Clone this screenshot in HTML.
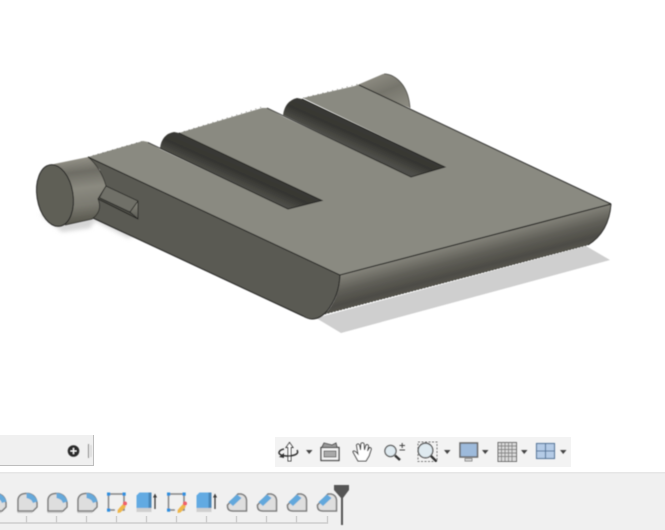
<!DOCTYPE html>
<html>
<head>
<meta charset="utf-8">
<style>
html,body{margin:0;padding:0;background:#fff;width:665px;height:530px;overflow:hidden}
svg{display:block;position:absolute;left:0;top:0}
</style>
</head>
<body>
<svg width="665" height="530" viewBox="0 0 665 530" xmlns="http://www.w3.org/2000/svg">
<defs>
<linearGradient id="barrel" gradientUnits="userSpaceOnUse" x1="72" y1="160" x2="80" y2="224">
<stop offset="0" stop-color="#918f85"/><stop offset=".2" stop-color="#6e6d65"/><stop offset=".45" stop-color="#8b8a80"/><stop offset=".72" stop-color="#7b7a71"/><stop offset="1" stop-color="#545349"/>
</linearGradient>
<linearGradient id="frontg" gradientUnits="userSpaceOnUse" x1="470" y1="240" x2="482" y2="285">
<stop offset="0" stop-color="#86857c"/><stop offset=".35" stop-color="#5f5e57"/><stop offset=".62" stop-color="#4d4c46"/><stop offset="1" stop-color="#64635b"/>
</linearGradient>
<linearGradient id="band1" gradientUnits="userSpaceOnUse" x1="241" y1="186" x2="250" y2="166">
<stop offset="0" stop-color="#4e4e48"/><stop offset=".5" stop-color="#363632"/><stop offset="1" stop-color="#3a3a35"/>
</linearGradient>
<linearGradient id="band2" gradientUnits="userSpaceOnUse" x1="364" y1="152" x2="373" y2="132">
<stop offset="0" stop-color="#4e4e48"/><stop offset=".5" stop-color="#363632"/><stop offset="1" stop-color="#3a3a35"/>
</linearGradient>
<linearGradient id="rc" gradientUnits="userSpaceOnUse" x1="380" y1="72" x2="395" y2="108">
<stop offset="0" stop-color="#8f8d83"/><stop offset=".5" stop-color="#76756c"/><stop offset="1" stop-color="#8a897f"/>
</linearGradient>
<linearGradient id="tg" x1="0" y1="0" x2="0" y2="1">
<stop offset="0" stop-color="#8a897f"/><stop offset="1" stop-color="#5a5a53"/>
</linearGradient>
<filter id="s" x="-5%" y="-5%" width="110%" height="110%"><feGaussianBlur stdDeviation=".45"/></filter>
<filter id="b" x="-30%" y="-30%" width="160%" height="160%"><feGaussianBlur stdDeviation="2.2"/></filter>
<filter id="i" x="-5%" y="-5%" width="110%" height="110%"><feGaussianBlur stdDeviation=".4"/></filter>

<g id="fil">
<path d="M1.5 19 V8 Q2 2 9 1.5 H12 Q19.5 3 20.5 11 V15 L16.5 19 Z" fill="#dedede" stroke="#7c7c7c" stroke-width="1.5"/>
<path d="M1 20.5 H16" stroke="#c4c4c4" stroke-width="1"/>
<path d="M10 1 Q18 1.5 21 9.5 L16.5 11 Q15 7 10 6 Z" fill="#66a9da"/>
</g>
<g id="cham">
<path d="M1.5 14 L1.5 13 L12 2 H15 Q20 3 20.5 8 V19 H7 Q1.5 19 1.5 14 Z" fill="#dedede" stroke="#7c7c7c" stroke-width="1.5"/>
<path d="M2.5 10 L11 2.5 L15.5 6 L7 14 Z" fill="#62a8dc"/>
</g>
<g id="sk">
<path d="M1.500 1.500 H17 V17.500 H1.500 Z" fill="none" stroke="#858585" stroke-width="1.500"/>
<rect x="0" y="0" width="3.200" height="3.200" fill="#2f8fe0"/><rect x="15.500" y="0" width="3.200" height="3.200" fill="#2f8fe0"/><rect x="0" y="16" width="3.200" height="3.200" fill="#2f8fe0"/>
<rect x="8" y="16" width="4" height="3" fill="#eee"/>
<path d="M10.500 17.500 L16 11.500 L19 14 L13.500 20 L10.500 20.500 Z" fill="#efb84a"/>
<circle cx="18" cy="11" r="2" fill="#f0606a"/>
</g>
<g id="ext">
<rect x="0" y="16" width="15" height="4" fill="#cfcfcf"/>
<path d="M0 3.500 L3 0.500 H15 V16 H0 Z" fill="#62aae2"/>
<path d="M12 0.500 H15 V16 H12 Z" fill="#4a86b8"/>
<path d="M18.500 17 V4" stroke="#3a3a3a" stroke-width="1.300"/>
<path d="M16.500 5.500 L18.500 1.500 L20.500 5.500 Z" fill="#3a3a3a"/>
</g>
<path id="tri" d="M0 0 H6.500 L3.200 4 Z" fill="#444"/>
</defs>

<rect width="665" height="530" fill="#fff"/>

<!-- shadows -->
<g filter="url(#b)" fill="#d6d6d6">
<path d="M40 214 L62 232 L90 228 L95 221 L128 238 L135 236 L90 205 Z"/>
</g>
<path d="M316 318 L586 246 L610 260 L341 333 Z" fill="#cfcfcf" filter="url(#s)"/>

<g filter="url(#s)">
<!-- right cylinder -->
<path d="M355 86 L383 74 Q394 74 402 84 Q409 93 410 108 Z" fill="url(#rc)"/>
<path d="M384 74 Q394 74 402 84 Q409 93 410 108" stroke="#3a3a36" stroke-width=".7" fill="none"/>

<!-- top face -->
<path d="M88 157 L143 141 L148 142 L160 149 L288 209 L322 200.500 L179 133 L262 108 L267 108 L284 117 L411 176 L445 167 L303 98 L359 85 L611 204 L340 275 Z" fill="#8a8a81"/>
<path d="M88 157 L143 141 M179 133 L262 107 M303 98 L359 84" stroke="#55554f" stroke-width=".6" stroke-dasharray="1 4" fill="none"/>

<!-- channels -->
<path d="M179 133 L322 200.500 L288 209 L160 148 Q162 134 174 132 Z" fill="url(#band1)"/>
<path d="M179 133 L322 200.500 L288 209 L148 142.500" stroke="#1e1e1c" stroke-width=".9" fill="none"/>
<path d="M302 99 L445 167 L411 177 L283 115 Q285 101 297 98 Z" fill="url(#band2)"/>
<path d="M302 99 L445 167 L411 177 L267 108" stroke="#1e1e1c" stroke-width=".9" fill="none"/>

<!-- front rounded surface -->
<path d="M340 275 L611 204 Q609 232 588 245 L325 314 Q339 300 340 275 Z" fill="url(#frontg)"/>
<path d="M325 314 L588 245" stroke="#2e2e2b" stroke-width=".8" stroke-dasharray="1.200 2" fill="none"/>
<path d="M340 275 L611 204" stroke="#1d1d1b" stroke-width="1.100" fill="none"/>
<path d="M611 204 Q609 232 588 245" stroke="#2c2c29" stroke-width="1" fill="none"/>

<!-- left side wall -->
<path d="M88 157 L340 275 Q339 296 327 311 Q320 319 312 319 Q308 319 303 316 L93 218 L100 170 Z" fill="#5a5a53"/>
<path d="M88 157 L340 275 Q339 296 327 311 Q320 319 312 319 Q308 319 303 316 L93 218" stroke="#1f1f1d" stroke-width="1" fill="none"/>
<path d="M359 85 L611 204" stroke="#1f1f1d" stroke-width="1" fill="none"/>

<!-- barrel -->
<path d="M49 165 L88 157 Q101 168 106 186 L98 199 Q103 211 92 219 L65 225 Z" fill="url(#barrel)"/>
<path d="M88 157 Q101 168 106 186 L98 199 Q103 211 92 219 L65 225" stroke="#2a2a27" stroke-width=".8" fill="none"/>
<!-- end cap -->
<ellipse cx="55" cy="195.500" rx="18" ry="31" transform="rotate(-9 55 195.500)" fill="#5e5e57" stroke="#1f1f1d" stroke-width="1"/>

<!-- side slot -->
<path d="M98 199 L106 186 L138 201 L138 219 Z" fill="#4b4b45"/>
<path d="M106 186 L138 201 L130 212 L100 198 Z" fill="#6f6f67"/>
<path d="M130 212 L138 201 L138 219 Z" fill="url(#tg)"/>
<path d="M98 199 L106 186 L138 201 L138 219 L98 199 M100 198 L130 212 L138 219 M130 212 L138 201" stroke="#1f1f1d" stroke-width=".8" fill="none"/>
</g>

<!-- left panel -->
<rect x="0" y="435" width="93" height="30" fill="#f0f0f0"/>
<path d="M0 465.500 H93.500 V435" stroke="#bdbdbd" fill="none"/>
<g filter="url(#i)">
<circle cx="73.500" cy="451" r="5.800" fill="#2c2c2c"/>
<path d="M70.500 451 H76.500 M73.500 448 V454" stroke="#fff" stroke-width="1.300"/>
<path d="M88.500 444 V458" stroke="#8a8a8a" stroke-width="1"/>
<path d="M91 445 V457" stroke="#cfcfcf" stroke-width="1"/>
</g>

<!-- nav bar -->
<rect x="275" y="437" width="296" height="30" fill="#f3f3f3"/>
<g filter="url(#i)">
<!-- orbit -->
<path d="M289.500 442.500 L286 447.500 H288 V461 H291 V447.500 H293 Z" fill="#fff" stroke="#333" stroke-width="1"/>
<path d="M297 450 Q300 455 289 456 Q280 456 279 453 Q279 450 284 449" fill="none" stroke="#333" stroke-width="1.500"/>
<path d="M279 457 L284 453 V458 Z" fill="#333"/>
<use href="#tri" x="306" y="450"/>
<!-- look at -->
<rect x="321" y="447.500" width="18" height="13" fill="#f5f5f5" stroke="#444" stroke-width="1.300"/>
<rect x="324" y="451" width="12" height="6" fill="#a9a9a9" stroke="#555" stroke-width=".8"/>
<path d="M322 447 L324 443 L332 445 L336 443 L337 447" fill="#999" stroke="#444" stroke-width=".9"/>
<!-- hand -->
<path d="M358 461 L353 452 Q353 450 356 452 L358 454 L356.500 445 Q358 443 359.500 445 L360.500 450 L361 443.500 Q363 442 364 444 L364.500 450 L366 445 Q368 444 368.500 446 L367.500 451 L369.500 447.500 Q372 448 371 450 L369 456 L366 461 Z" fill="#fff" stroke="#333" stroke-width="1"/>
<!-- zoom +- -->
<circle cx="390.500" cy="451" r="5.600" fill="#dfeaf0" stroke="#555" stroke-width="1.200"/>
<path d="M395 455.500 L400 460" stroke="#333" stroke-width="2.400"/>
<path d="M399.500 445.500 H405 M402.200 443 V448 M399.500 450 H405" stroke="#444" stroke-width="1"/>
<!-- fit -->
<path d="M418 442 H437 V461.500 H418 Z" fill="none" stroke="#777" stroke-width="1" stroke-dasharray="2 1.500"/>
<circle cx="425.500" cy="450.500" r="7.300" fill="#dfeaf0" stroke="#555" stroke-width="1.300"/>
<path d="M431 456 L436.500 461.500" stroke="#333" stroke-width="2.400"/>
<use href="#tri" x="444" y="450"/>
<!-- display -->
<rect x="460" y="443" width="17.500" height="14" fill="#9dbadb" stroke="#666" stroke-width="1.500"/>
<path d="M465 458.500 H472 V461 H465 Z" fill="#ddd" stroke="#888" stroke-width=".9"/>
<use href="#tri" x="482" y="450"/>
<!-- grid -->
<rect x="498" y="442.500" width="18.500" height="19" fill="#dadada" stroke="#666" stroke-width="1"/>
<path d="M501.500 442 V461 M505 442 V461 M508.500 442 V461 M512 442 V461 M498 446 H516 M498 449.500 H516 M498 453 H516 M498 456.500 H516" stroke="#808080" stroke-width=".9"/>
<use href="#tri" x="521" y="450"/>
<!-- viewports -->
<rect x="536.500" y="443.500" width="18" height="15" fill="#b4cbe6" stroke="#55749a" stroke-width="1.100"/>
<path d="M545.500 443.500 V458.500 M536.500 451 H554.500" stroke="#55749a" stroke-width="1.100"/>
<use href="#tri" x="560" y="450"/>
</g>

<!-- bottom timeline -->
<rect x="0" y="472" width="665" height="58" fill="#f0f0f0"/>
<rect x="0" y="472" width="665" height="1.500" fill="#e6e6e6"/>
<path d="M0 523 H327.500 V516 M26.500 516 V523 M56.500 516 V523 M86.500 516 V523 M116.500 516 V523 M146.500 516 V523 M176.500 516 V523 M206.500 516 V523 M236.500 516 V523 M266.500 516 V523 M296.500 516 V523" stroke="#cdcdcd" stroke-width="1.500" fill="none"/>
<g filter="url(#i)">
<use href="#fil" x="-14.500" y="492"/>
<use href="#fil" x="16.500" y="492"/>
<use href="#fil" x="46.500" y="492"/>
<use href="#fil" x="76.500" y="492"/>
<use href="#sk" x="107" y="492.500"/>
<use href="#ext" x="136.500" y="492"/>
<use href="#sk" x="167" y="492.500"/>
<use href="#ext" x="196.500" y="492"/>
<use href="#cham" x="226" y="492"/>
<use href="#cham" x="256" y="492"/>
<use href="#cham" x="286" y="492"/>
<use href="#cham" x="316" y="492"/>
<path d="M334 485 H349 V490 L343 498 V525 H341 V498 L334 490 Z" fill="#555"/>
</g>
</svg>
</body>
</html>
